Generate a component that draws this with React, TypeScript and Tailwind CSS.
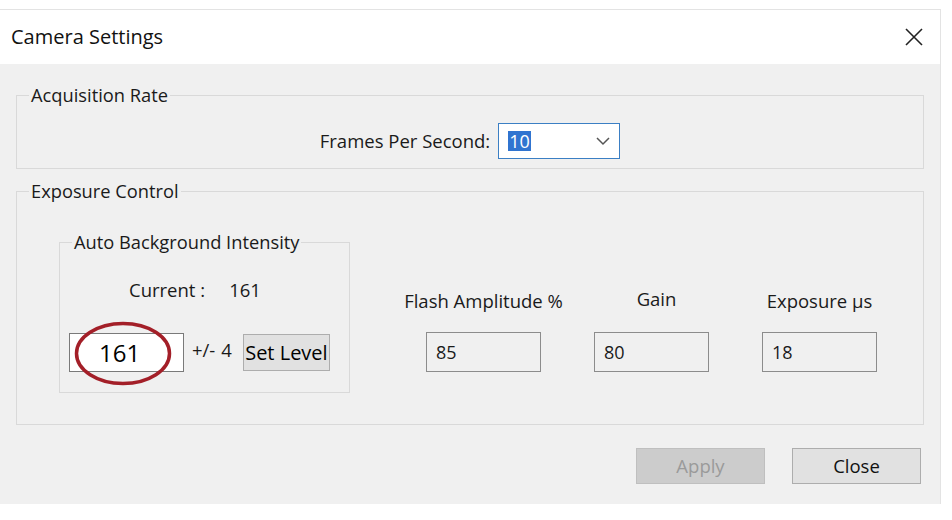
import React from 'react';

const font = { fontFamily: '"Open Sans", "Noto Sans", sans-serif' };

function GroupLabel({ children }: { children: React.ReactNode }) {
  return (
    <div className="-mt-[13px] ml-[12px] w-fit bg-[#f0f0f0] px-[2px] text-[18.3px] leading-[24px] text-[#1a1a1a]">
      {children}
    </div>
  );
}

function ReadField({ label, value, shift }: { label: string; value: string; shift?: string }) {
  return (
    <div className="flex w-[115px] flex-col items-center">
      <div className={`whitespace-nowrap text-[18.5px] leading-[24px] text-[#1a1a1a] ${shift ?? ''}`}>{label}</div>
      <div className="mt-[19px] flex h-[40px] w-[115px] items-center border border-[#8c8c8c] bg-[#f0f0f0] pl-[9px] text-[18px] text-[#1a1a1a]">
        {value}
      </div>
    </div>
  );
}

export default function App() {
  return (
    <div className="h-[520px] w-[952px] overflow-hidden bg-white pt-[9px]" style={font}>
      <div className="w-[941px] border-t border-r border-[#e3e3e3]">
        {/* title bar */}
        <div className="flex h-[54px] items-center justify-between bg-white pl-[11px] pr-[17px]">
          <span className="text-[20px] text-[#111]">Camera Settings</span>
          <svg width="18" height="18" viewBox="0 0 18 18" className="text-[#222]">
            <path d="M1 1 L17 17 M17 1 L1 17" stroke="currentColor" strokeWidth="1.6" fill="none" />
          </svg>
        </div>

        {/* body */}
        <div className="h-[440px] bg-[#f0f0f0] px-[16px] pt-[31px]">
          {/* Acquisition Rate */}
          <div className="h-[74px] w-[908px] border border-[#d9d9d9]">
            <GroupLabel>Acquisition Rate</GroupLabel>
            <div className="mt-[16px] flex items-center justify-center">
              <span className="text-[18.5px] text-[#1a1a1a]">Frames Per Second:</span>
              <div className="ml-[8px] flex h-[36px] w-[122px] items-center justify-between border border-[#3b7fc4] bg-white pl-[9px] pr-[9px]">
                <span className="bg-[#3074d0] px-[1px] text-[18px] leading-[20px] text-white">10</span>
                <svg width="14" height="9" viewBox="0 0 14 9">
                  <path d="M1 1 L7 7 L13 1" stroke="#555" strokeWidth="1.5" fill="none" />
                </svg>
              </div>
            </div>
          </div>

          {/* Exposure Control */}
          <div className="mt-[22px] h-[234px] w-[908px] border border-[#d9d9d9]">
            <GroupLabel>Exposure Control</GroupLabel>
            <div className="flex items-start">
              {/* Auto Background Intensity */}
              <div className="ml-[42px] mt-[39px] h-[151px] w-[291px] border border-[#d9d9d9]">
                <GroupLabel>Auto Background Intensity</GroupLabel>
                <div className="mt-[24px] flex pl-[69px] text-[18.5px] leading-[24px] text-[#1a1a1a]">
                  <span>Current :</span>
                  <span className="ml-[24px]">161</span>
                </div>
                <div className="mt-[31px] flex items-center pl-[9px]">
                  <div className="relative flex h-[39px] w-[115px] items-center border border-[#7a7a7a] bg-white pl-[29px] text-[24px] text-black">
                    161
                    <svg
                      className="absolute left-[4px] top-[-13px]"
                      width="98"
                      height="65"
                      viewBox="0 0 98 65"
                    >
                      <ellipse cx="49" cy="32.5" rx="46.5" ry="30" stroke="#a31f28" strokeWidth="3.5" fill="none" />
                    </svg>
                  </div>
                  <span className="-mt-[6px] ml-[8px] text-[18.5px] text-[#1a1a1a]">
                    +/-<span className="ml-[6px]">4</span>
                  </span>
                  <button className="ml-[11px] flex h-[37px] w-[87px] items-center justify-center whitespace-nowrap border border-[#adadad] bg-[#e1e1e1] px-0 text-[20px] text-black">
                    Set Level
                  </button>
                </div>
              </div>

              {/* read-only fields */}
              <div className="ml-[76px] mt-[86px] flex gap-[53px]">
                <ReadField label="Flash Amplitude %" value="85" />
                <ReadField label="Gain" value="80" shift="relative -top-[2px] left-[5px]" />
                <ReadField label="Exposure µs" value="18" />
              </div>
            </div>
          </div>

          {/* buttons */}
          <div className="mt-[23px] flex justify-end gap-[27px] pr-[3px]">
            <button className="h-[36px] w-[129px] border border-[#bfbfbf] bg-[#cccccc] text-[18.5px] text-[#9a9a9a]">
              Apply
            </button>
            <button className="h-[36px] w-[129px] border border-[#adadad] bg-[#e1e1e1] text-[18.5px] text-[#111]">
              Close
            </button>
          </div>
        </div>
      </div>
    </div>
  );
}
